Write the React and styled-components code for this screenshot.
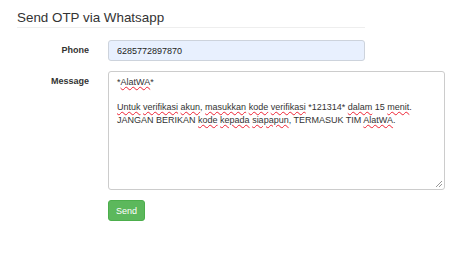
import styled, { createGlobalStyle } from 'styled-components';

const GlobalStyle = createGlobalStyle`
  body {
    margin: 0;
    background: #fff;
    font-family: "Liberation Sans", Arial, sans-serif;
    color: #333;
  }
`;

const Page = styled.div`
  padding: 10px 17px;
  width: 430px;
`;

const Title = styled.h3`
  margin: 0;
  width: 348px;
  padding-bottom: 2px;
  border-bottom: 1px solid #eee;
  font-size: 13.4px;
  font-weight: 400;
  line-height: 15px;
`;

const Form = styled.form`
  margin-top: 12px;
  display: flex;
  flex-direction: column;
  gap: 10px;
`;

const Row = styled.div`
  display: flex;
  align-items: flex-start;
`;

const Label = styled.label`
  width: 72px;
  margin-right: 19px;
  padding-top: ${p => p.$top || 5}px;
  text-align: right;
  font-size: 9px;
  line-height: 11px;
  font-weight: 700;
  color: #333;
`;

const Input = styled.input`
  box-sizing: border-box;
  width: 257px;
  height: 21px;
  padding: 0 8px;
  border: 1px solid #cdd3dc;
  border-radius: 3px;
  background: #e8f0fe;
  font-family: inherit;
  font-size: 9px;
  color: #222;
  outline: none;
`;

const Area = styled.div`
  position: relative;
  box-sizing: border-box;
  width: 337px;
  height: 119px;
  padding: 4px 8px;
  border: 1px solid #ccc;
  border-radius: 3px;
  font-size: 9px;
  line-height: 12.5px;
  color: #333;
  white-space: pre-wrap;
`;

const Typo = styled.span`
  text-decoration: underline wavy #e23;
  text-decoration-thickness: 1px;
  text-underline-offset: 1px;
`;

const Grip = styled.svg`
  position: absolute;
  right: 1px;
  bottom: 1px;
`;

const Button = styled.button`
  margin-left: 91px;
  width: 37px;
  height: 21px;
  padding: 0;
  border: 1px solid #4cae4c;
  border-radius: 3px;
  background: #5cb85c;
  color: #fff;
  font-family: inherit;
  font-size: 9px;
`;

export default function App() {
  return (
    <Page>
      <GlobalStyle />
      <Title>Send OTP via Whatsapp</Title>
      <Form onSubmit={e => e.preventDefault()}>
        <Row>
          <Label>Phone</Label>
          <Input type="text" defaultValue="6285772897870" />
        </Row>
        <Row>
          <Label $top={5}>Message</Label>
          <Area>
            *<Typo>AlatWA</Typo>*{'\n\n'}
            <Typo>Untuk</Typo> <Typo>verifikasi</Typo> <Typo>akun</Typo>, <Typo>masukkan</Typo> <Typo>kode</Typo> <Typo>verifikasi</Typo> *121314* <Typo>dalam</Typo> 15 <Typo>menit</Typo>.{'\n'}
            JANGAN BERIKAN <Typo>kode</Typo> <Typo>kepada</Typo> <Typo>siapapun</Typo>, TERMASUK TIM <Typo>AlatWA</Typo>.
            <Grip width="8" height="8" viewBox="0 0 8 8">
              <path d="M7 1L1 7M7 4L4 7" stroke="#999" strokeWidth="1" />
            </Grip>
          </Area>
        </Row>
        <Row>
          <Button type="submit">Send</Button>
        </Row>
      </Form>
    </Page>
  );
}
